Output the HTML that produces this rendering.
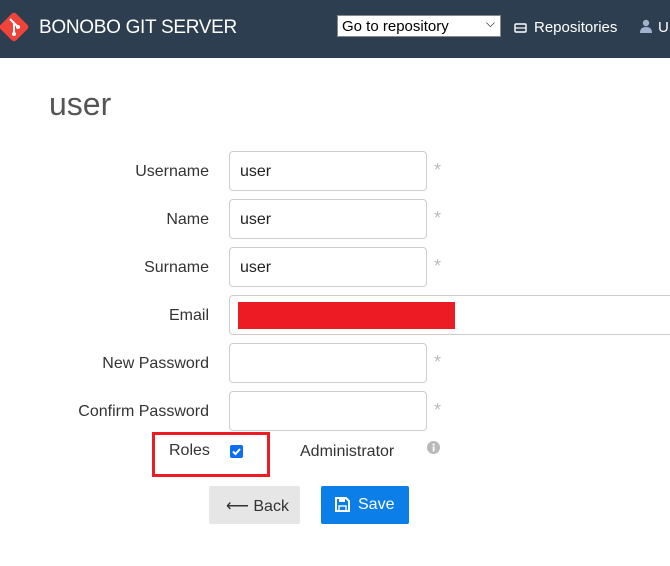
<!DOCTYPE html>
<html><head><meta charset="utf-8"><style>
*{box-sizing:border-box}
body{margin:0;width:670px;height:566px;overflow:hidden;background:#fff;font-family:"Liberation Sans",sans-serif;color:#333;position:relative}
.hdr{position:absolute;left:0;top:0;width:670px;height:58px;background:#2d3e50}
.abs{position:absolute}
.lbl{position:absolute;right:461px;font-size:16px;color:#333;text-align:right;white-space:nowrap}
.inp{position:absolute;left:229px;width:198px;height:40px;border:1px solid #ccc;border-radius:4px;background:#fff;font-size:16px;padding:11px 10px 0;color:#222}
.ast{position:absolute;left:434px;color:#bbb;font-size:18px}
</style></head><body>
<div class="hdr">
  <svg class="abs" style="left:-4px;top:9px" width="36" height="36" viewBox="0 0 36 36"><rect x="7" y="7" width="22" height="22" rx="3" transform="rotate(45 18 18)" fill="#f0433a"/><path d="M14 10 L22 18 M18 14 V25" stroke="#fff" stroke-width="2" fill="none"/><circle cx="18" cy="25" r="2" fill="#fff"/><circle cx="22" cy="18" r="2" fill="#fff"/></svg>
  <div class="abs" style="left:39px;top:17px;color:#fff;font-size:19px;letter-spacing:-0.3px">BONOBO GIT SERVER</div>
  <div class="abs" style="left:337px;top:15px;width:164px;height:22px;background:#fff;border:1px solid #888;font-size:15px;color:#000;padding:2px 4px">Go to repository<span style="position:absolute;right:5px;top:0;font-size:12px">&#x2335;</span></div>
  <svg class="abs" style="left:514px;top:21px" width="13" height="12" viewBox="0 0 13 12"><rect x="1" y="3" width="11" height="8" rx="1" fill="none" stroke="#fff" stroke-width="1.4"/><line x1="1" y1="7" x2="12" y2="7" stroke="#fff" stroke-width="1.2"/></svg>
  <div class="abs" style="left:534px;top:19px;color:#fff;font-size:15px">Repositories</div>
  <svg class="abs" style="left:640px;top:19px" width="12" height="14" viewBox="0 0 12 14"><circle cx="6" cy="4" r="3.2" fill="#9fb4cc"/><path d="M0 14 Q0 8 6 8 Q12 8 12 14Z" fill="#9fb4cc"/></svg>
  <div class="abs" style="left:658px;top:19px;color:#fff;font-size:15px">U</div>
</div>
<div class="abs" style="left:49px;top:86px;font-size:32px;color:#555">user</div>

<div class="lbl" style="top:163px">Username</div><div class="inp" style="top:151px">user</div><div class="ast" style="top:160px">*</div>
<div class="lbl" style="top:211px">Name</div><div class="inp" style="top:199px">user</div><div class="ast" style="top:208px">*</div>
<div class="lbl" style="top:259px">Surname</div><div class="inp" style="top:247px">user</div><div class="ast" style="top:256px">*</div>
<div class="lbl" style="top:307px">Email</div><div class="inp" style="top:295px;width:460px"></div>
<div class="abs" style="left:238px;top:302px;width:217px;height:27px;background:#ed1c24"></div>
<div class="lbl" style="top:355px">New Password</div><div class="inp" style="top:343px"></div><div class="ast" style="top:352px">*</div>
<div class="lbl" style="top:403px">Confirm Password</div><div class="inp" style="top:391px"></div><div class="ast" style="top:400px">*</div>

<div class="abs" style="left:152px;top:432px;width:118px;height:45px;border:3px solid #ed1c24"></div>
<div class="abs" style="left:169px;top:442px;font-size:16px">Roles</div>
<div class="abs" style="left:230px;top:445px;width:13px;height:13px;background:#0b6ef5;border-radius:2px"><svg width="13" height="13" viewBox="0 0 13 13"><path d="M3 6.5 L5.5 9 L10 4" stroke="#fff" stroke-width="2" fill="none"/></svg></div>
<div class="abs" style="left:300px;top:443px;font-size:16px">Administrator</div>
<svg class="abs" style="left:427px;top:441px" width="13" height="13" viewBox="0 0 13 13"><circle cx="6.5" cy="6.5" r="6.5" fill="#b9b9b9"/><rect x="5.7" y="5.5" width="1.8" height="5" fill="#fff"/><circle cx="6.6" cy="3.6" r="1.1" fill="#fff"/></svg>

<div class="abs" style="left:209px;top:486px;width:91px;height:38px;background:#e6e6e6;border-radius:2px;font-size:16px;color:#333;padding:10px 0 0 17px">&#x27F5; Back</div>
<div class="abs" style="left:321px;top:486px;width:88px;height:38px;background:#0b7ee8;border-radius:2px;font-size:16px;color:#fff;padding:10px 0 0 37px">Save</div>
<svg class="abs" style="left:335px;top:497px" width="15" height="15" viewBox="0 0 15 15"><path d="M1 1 H11 L14 4 V14 H1 Z" fill="none" stroke="#fff" stroke-width="2"/><rect x="4" y="1" width="6" height="4" fill="#fff"/><rect x="4" y="9" width="7" height="5" fill="none" stroke="#fff" stroke-width="1.4"/></svg>
</body></html>
